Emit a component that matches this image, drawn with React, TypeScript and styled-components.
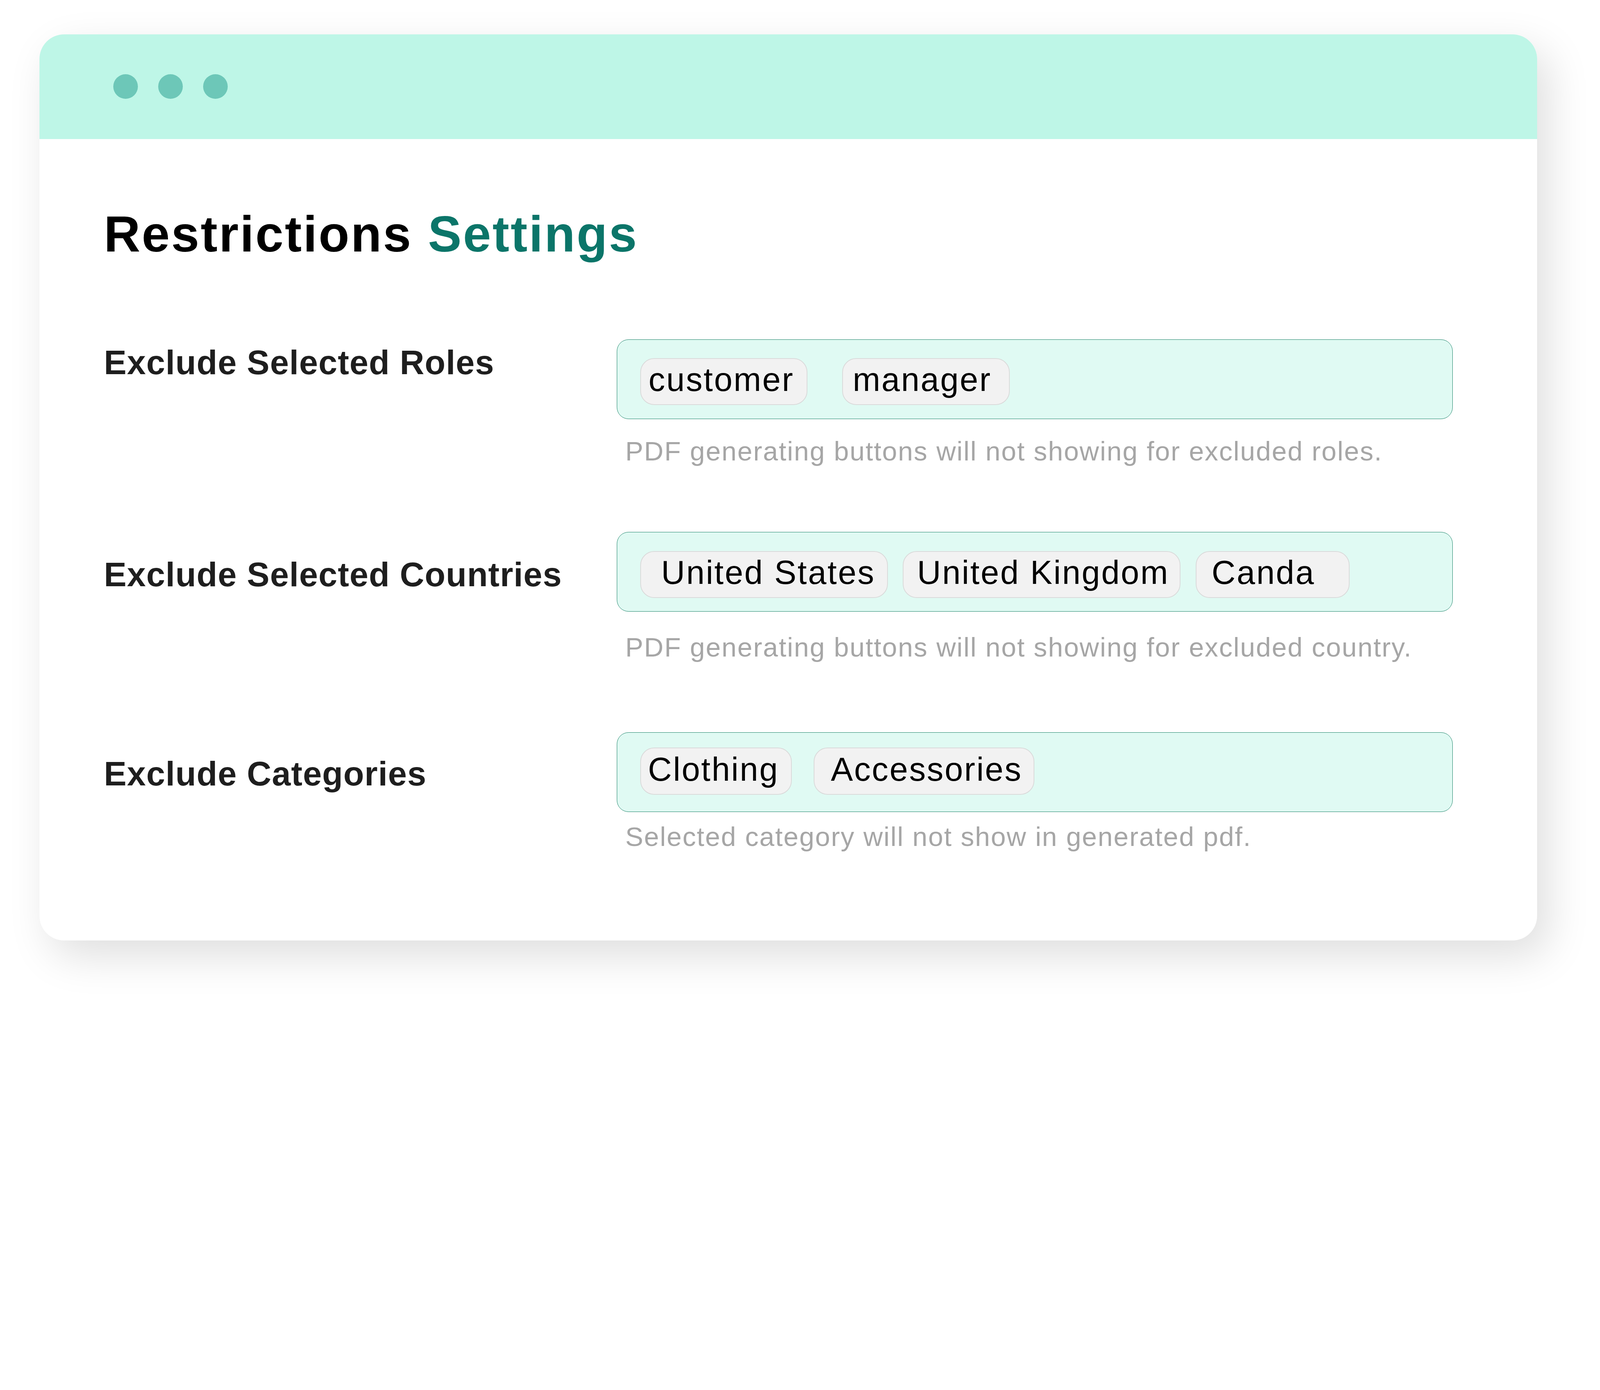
import { FC } from 'react';
import styled, { createGlobalStyle } from 'styled-components';

const GlobalStyle = createGlobalStyle`
  html, body {
    margin: 0;
    padding: 0;
    background: #ffffff;
  }

  body {
    font-family: "Liberation Sans", Arial, sans-serif;
  }
`;

const Page = styled.div`
  box-sizing: border-box;
  height: 100vh;
  padding: 88.2px 0 0 101.1px;
  overflow: hidden;
`;

const Window = styled.section`
  display: flex;
  flex-direction: column;
  width: 3834.4px;
  height: 2319.7px;
  border-radius: 63.1px;
  background: #ffffff;
  box-shadow: 28.7px 39.4px 107.5px rgba(0, 0, 0, 0.13);
  overflow: hidden;
`;

const TitleBar = styled.header`
  flex: none;
  display: flex;
  align-items: center;
  gap: 52.3px;
  height: 267.4px;
  padding-left: 188.5px;
  background: #bef6e7;
`;

const Dot = styled.span`
  width: 63.1px;
  height: 63.1px;
  border-radius: 50%;
  background: #6dc7b8;
`;

const Body = styled.div`
  padding: 179.6px 0 0 164.9px;
`;

const Title = styled.h1`
  margin: 0;
  color: #000000;
  font-size: 129px;
  font-weight: 700;
  line-height: 1;
  letter-spacing: 3.7px;
`;

const Accent = styled.span`
  color: #0b7569;
`;

const Rows = styled.div`
  display: flex;
  flex-direction: column;
  margin-top: 204.4px;
`;

const Row = styled.div<{ $space: number }>`
  display: grid;
  grid-template-columns: 1313.3px 2139.8px;
  align-items: start;
  margin-top: ${({ $space }) => $space}px;
`;

const Label = styled.h2<{ $offset: number }>`
  margin: ${({ $offset }) => $offset}px 0 0;
  color: #1e1e1e;
  font-size: 86.7px;
  font-weight: 700;
  line-height: 1;
  letter-spacing: 1.2px;
`;

const Field = styled.div`
  display: flex;
  flex-direction: column;
`;

const TagBox = styled.div<{ $padTop: number; $gap: number }>`
  display: flex;
  align-items: flex-start;
  gap: ${({ $gap }) => $gap}px;
  box-sizing: border-box;
  height: 204.3px;
  padding: ${({ $padTop }) => $padTop}px 0 0 58.7px;
  border: 1.5px solid #178066;
  border-radius: 30.1px;
  background: #e0faf3;
`;

const Tag = styled.span<{ $width: number; $padLeft: number }>`
  display: block;
  box-sizing: border-box;
  width: ${({ $width }) => $width}px;
  height: 120.4px;
  padding: 11.4px 0 0 ${({ $padLeft }) => $padLeft}px;
  border: 2px solid #dadada;
  border-radius: 35.8px;
  background: #f2f2f2;
  color: #000000;
  font-size: 84.6px;
  line-height: 1;
  letter-spacing: 3.1px;
  white-space: nowrap;
`;

const Hint = styled.p<{ $offset: number }>`
  margin: ${({ $offset }) => $offset}px 0 0;
  padding-left: 21.5px;
  color: #a6a6a6;
  font-size: 68.8px;
  line-height: 1;
  letter-spacing: 2.2px;
  white-space: nowrap;
`;

type TagItem = {
  text: string;
  width: number;
  padLeft: number;
};

type Restriction = {
  label: string;
  labelOffset: number;
  space: number;
  padTop: number;
  gap: number;
  tags: TagItem[];
  hint: string;
  hintOffset: number;
};

const restrictions: Restriction[] = [
  {
    label: 'Exclude Selected Roles',
    labelOffset: 16,
    space: 0,
    padTop: 47.2,
    gap: 88.9,
    tags: [
      { text: 'customer', width: 428, padLeft: 19.4 },
      { text: 'manager', width: 428.7, padLeft: 25.1 },
    ],
    hint: 'PDF generating buttons will not showing for excluded roles.',
    hintOffset: 48.7,
  },
  {
    label: 'Exclude Selected Countries',
    labelOffset: 66.7,
    space: 171.3,
    padTop: 48,
    gap: 38.7,
    tags: [
      { text: 'United States', width: 633.7, padLeft: 51.6 },
      { text: 'United Kingdom', width: 711.1, padLeft: 34.4 },
      { text: 'Canda', width: 393.5, padLeft: 38.7 },
    ],
    hint: 'PDF generating buttons will not showing for excluded country.',
    hintOffset: 58,
  },
  {
    label: 'Exclude Categories',
    labelOffset: 63.1,
    space: 182,
    padTop: 38.6,
    gap: 55.9,
    tags: [
      { text: 'Clothing', width: 388.5, padLeft: 17.9 },
      { text: 'Accessories', width: 564.9, padLeft: 41.6 },
    ],
    hint: 'Selected category will not show in generated pdf.',
    hintOffset: 30,
  },
];

const RestrictionRow: FC<{ item: Restriction }> = ({ item }) => (
  <Row $space={item.space}>
    <Label $offset={item.labelOffset}>{item.label}</Label>
    <Field>
      <TagBox $padTop={item.padTop} $gap={item.gap}>
        {item.tags.map((tag) => (
          <Tag key={tag.text} $width={tag.width} $padLeft={tag.padLeft}>
            {tag.text}
          </Tag>
        ))}
      </TagBox>
      <Hint $offset={item.hintOffset}>{item.hint}</Hint>
    </Field>
  </Row>
);

const App: FC = () => (
  <>
    <GlobalStyle />
    <Page>
      <Window>
        <TitleBar>
          <Dot />
          <Dot />
          <Dot />
        </TitleBar>
        <Body>
          <Title>
            Restrictions
            {' '}
            <Accent>Settings</Accent>
          </Title>
          <Rows>
            {restrictions.map((item) => (
              <RestrictionRow key={item.label} item={item} />
            ))}
          </Rows>
        </Body>
      </Window>
    </Page>
  </>
);

export default App;
